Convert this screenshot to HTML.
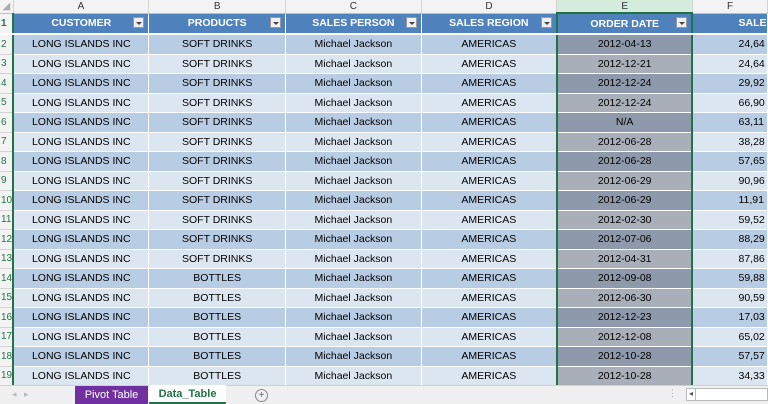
<!DOCTYPE html><html><head><style>
body{margin:0;width:768px;height:403px;overflow:hidden;background:#fff;font-family:"Liberation Sans",Arial,sans-serif;font-size:10.5px;color:#000;position:relative}
table{border-collapse:collapse;table-layout:fixed;position:absolute;left:0;top:0}
td{padding:0;text-align:center;white-space:nowrap;overflow:hidden;border-right:1px solid #fff;border-bottom:1px solid #fff;height:18.5px}
tr.ch td{height:12px;background:#f3f3f3;color:#333;border-right:1px solid #d4d4d4;border-bottom:1px solid #bdbdbd;font-size:10px}
td.rn{background:#f3f3f3;color:#217346;font-size:10px;border-right:2px solid #217346;border-bottom:1px solid #d4d4d4;text-align:left;padding-left:1px}
tr.h td{background:#4f81bd;color:#fff;font-weight:bold;height:19px;border-bottom:2px solid #fff;position:relative}
tr.h td.rn{background:#f3f3f3;color:#217346}
.dd{position:absolute;right:4px;top:3px;width:11px;height:11px;background:#f0f0f0;border:1px solid #999;box-sizing:border-box}
.dd:after{content:"";position:absolute;left:2px;top:4px;border-left:3px solid transparent;border-right:3px solid transparent;border-top:3px solid #444}
tr.d td{background:#b8cce4}
tr.l td{background:#dce6f1}
tr.d td.e{background:#8e9aab}
tr.l td.e{background:#a9afb8}
td.e{border-left:2px solid #217346;border-right:2px solid #217346}
td.f{text-align:left;padding-left:45px}
tr.d td.rn,tr.l td.rn{background:#f3f3f3}
.tabs{position:absolute;left:0;top:385px;width:768px;height:18px;background:#f0f0f0;border-top:1px solid #d0d0d0}
</style></head><body>
<table>
<colgroup><col style="width:12px"><col style="width:136px"><col style="width:137px"><col style="width:136px"><col style="width:136px"><col style="width:136px"><col style="width:75px"></colgroup>
<tr class="ch"><td style="border-right:1px solid #d4d4d4;color:#aaa">◢</td><td>A</td><td>B</td><td>C</td><td>D</td><td style="background:#d3ecdb;border-bottom:2px solid #217346">E</td><td>F</td></tr>
<tr class="h"><td class="rn">1</td><td>CUSTOMER<span class="dd"></span></td><td>PRODUCTS<span class="dd"></span></td><td>SALES PERSON<span class="dd"></span></td><td>SALES REGION<span class="dd"></span></td><td class="e" style="border-top:2px solid #217346">ORDER DATE<span class="dd"></span></td><td class="f">SALE</td></tr>
<tr class="d"><td class="rn">2</td><td>LONG ISLANDS INC</td><td>SOFT DRINKS</td><td>Michael Jackson</td><td>AMERICAS</td><td class="e">2012-04-13</td><td class="f">24,64</td></tr>
<tr class="l"><td class="rn">3</td><td>LONG ISLANDS INC</td><td>SOFT DRINKS</td><td>Michael Jackson</td><td>AMERICAS</td><td class="e">2012-12-21</td><td class="f">24,64</td></tr>
<tr class="d"><td class="rn">4</td><td>LONG ISLANDS INC</td><td>SOFT DRINKS</td><td>Michael Jackson</td><td>AMERICAS</td><td class="e">2012-12-24</td><td class="f">29,92</td></tr>
<tr class="l"><td class="rn">5</td><td>LONG ISLANDS INC</td><td>SOFT DRINKS</td><td>Michael Jackson</td><td>AMERICAS</td><td class="e">2012-12-24</td><td class="f">66,90</td></tr>
<tr class="d"><td class="rn">6</td><td>LONG ISLANDS INC</td><td>SOFT DRINKS</td><td>Michael Jackson</td><td>AMERICAS</td><td class="e">N/A</td><td class="f">63,11</td></tr>
<tr class="l"><td class="rn">7</td><td>LONG ISLANDS INC</td><td>SOFT DRINKS</td><td>Michael Jackson</td><td>AMERICAS</td><td class="e">2012-06-28</td><td class="f">38,28</td></tr>
<tr class="d"><td class="rn">8</td><td>LONG ISLANDS INC</td><td>SOFT DRINKS</td><td>Michael Jackson</td><td>AMERICAS</td><td class="e">2012-06-28</td><td class="f">57,65</td></tr>
<tr class="l"><td class="rn">9</td><td>LONG ISLANDS INC</td><td>SOFT DRINKS</td><td>Michael Jackson</td><td>AMERICAS</td><td class="e">2012-06-29</td><td class="f">90,96</td></tr>
<tr class="d"><td class="rn">10</td><td>LONG ISLANDS INC</td><td>SOFT DRINKS</td><td>Michael Jackson</td><td>AMERICAS</td><td class="e">2012-06-29</td><td class="f">11,91</td></tr>
<tr class="l"><td class="rn">11</td><td>LONG ISLANDS INC</td><td>SOFT DRINKS</td><td>Michael Jackson</td><td>AMERICAS</td><td class="e">2012-02-30</td><td class="f">59,52</td></tr>
<tr class="d"><td class="rn">12</td><td>LONG ISLANDS INC</td><td>SOFT DRINKS</td><td>Michael Jackson</td><td>AMERICAS</td><td class="e">2012-07-06</td><td class="f">88,29</td></tr>
<tr class="l"><td class="rn">13</td><td>LONG ISLANDS INC</td><td>SOFT DRINKS</td><td>Michael Jackson</td><td>AMERICAS</td><td class="e">2012-04-31</td><td class="f">87,86</td></tr>
<tr class="d"><td class="rn">14</td><td>LONG ISLANDS INC</td><td>BOTTLES</td><td>Michael Jackson</td><td>AMERICAS</td><td class="e">2012-09-08</td><td class="f">59,88</td></tr>
<tr class="l"><td class="rn">15</td><td>LONG ISLANDS INC</td><td>BOTTLES</td><td>Michael Jackson</td><td>AMERICAS</td><td class="e">2012-06-30</td><td class="f">90,59</td></tr>
<tr class="d"><td class="rn">16</td><td>LONG ISLANDS INC</td><td>BOTTLES</td><td>Michael Jackson</td><td>AMERICAS</td><td class="e">2012-12-23</td><td class="f">17,03</td></tr>
<tr class="l"><td class="rn">17</td><td>LONG ISLANDS INC</td><td>BOTTLES</td><td>Michael Jackson</td><td>AMERICAS</td><td class="e">2012-12-08</td><td class="f">65,02</td></tr>
<tr class="d"><td class="rn">18</td><td>LONG ISLANDS INC</td><td>BOTTLES</td><td>Michael Jackson</td><td>AMERICAS</td><td class="e">2012-10-28</td><td class="f">57,57</td></tr>
<tr class="l"><td class="rn">19</td><td>LONG ISLANDS INC</td><td>BOTTLES</td><td>Michael Jackson</td><td>AMERICAS</td><td class="e">2012-10-28</td><td class="f">34,33</td></tr>
</table>
<div class="tabs">
<span style="position:absolute;left:12px;top:3px;color:#bbb;font-size:9px">◂ &nbsp; ▸</span>
<div style="position:absolute;left:75px;top:0;width:73px;height:18px;background:#7030a0;color:#fff;text-align:center;line-height:18px;font-size:11px">Pivot Table</div>
<div style="position:absolute;left:149px;top:-1px;width:77px;height:19px;background:#fff;color:#217346;font-weight:bold;text-align:center;line-height:19px;font-size:11px;border-bottom:2px solid #217346;box-sizing:border-box">Data_Table</div>
<div style="position:absolute;left:255px;top:3px;width:11px;height:11px;border:1px solid #888;border-radius:50%;color:#666;font-size:10px;line-height:11px;text-align:center">+</div>
<span style="position:absolute;left:668px;top:2px;color:#aaa;font-size:9px">⋮</span>
<div style="position:absolute;left:686px;top:2px;width:82px;height:13px;background:#fff;border:1px solid #bbb;box-sizing:border-box"><span style="position:absolute;left:2px;top:0;font-size:8px;color:#555">◂</span><div style="position:absolute;left:8px;top:0;width:1px;height:11px;background:#bbb"></div></div>
</div>
</body></html>
